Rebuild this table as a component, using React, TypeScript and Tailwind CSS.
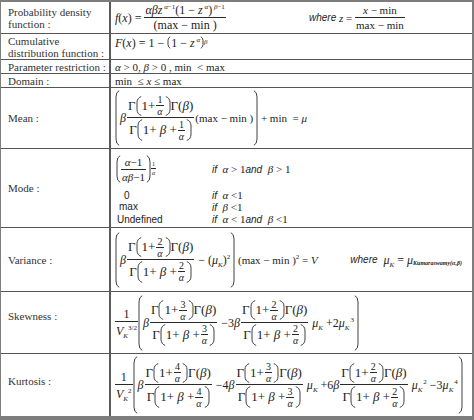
import React from 'react';

const serif = "font-['Liberation_Serif','Times_New_Roman',serif]";
const sans = "font-['Liberation_Sans',Arial,sans-serif]";

type Kids = { children?: React.ReactNode };

const V = ({ children }: Kids) => <span className="italic">{children}</span>;
const Sup = ({ children }: Kids) => <span className="relative -top-[5px] text-[7px] leading-none">{children}</span>;
const Sub = ({ children }: Kids) => <span className="relative top-[3px] text-[7px] leading-none italic">{children}</span>;
const W = ({ children }: Kids) => <span className={`${sans} italic text-[10px]`}>{children}</span>;
const T = ({ children }: Kids) => <span className="text-[11px]">{children}</span>;

// stretched delimiter, drawn like a MathType big paren
function P({ h, r = false, w = 5 }: { h: number; r?: boolean; w?: number }) {
  const c = Math.min(7, h / 3);
  const d = r
    ? `M0.8 0.6 Q${w - 1} 2 ${w - 1} ${c} L${w - 1} ${h - c} Q${w - 1} ${h - 2} 0.8 ${h - 0.6}`
    : `M${w - 0.8} 0.6 Q1 2 1 ${c} L1 ${h - c} Q1 ${h - 2} ${w - 0.8} ${h - 0.6}`;
  return (
    <svg width={w} height={h} viewBox={`0 0 ${w} ${h}`} className="block shrink-0">
      <path d={d} fill="none" stroke="#2a2a2a" strokeWidth="0.9" />
    </svg>
  );
}

function Frac({ n, d, cls = '' }: { n: React.ReactNode; d: React.ReactNode; cls?: string }) {
  return (
    <span className={`inline-flex flex-col items-stretch ${cls}`}>
      <span className="flex items-end justify-center px-px">{n}</span>
      <span className="my-px h-px bg-[#2a2a2a]" />
      <span className="flex items-start justify-center px-px">{d}</span>
    </span>
  );
}

const Small = ({ k }: { k: React.ReactNode }) => (
  <Frac cls="text-[10px] leading-[9px] mx-px" n={k} d={<V>α</V>} />
);

const Mu = ({ p }: { p?: React.ReactNode }) => (
  <span className="whitespace-nowrap">
    <V>μ</V>
    <span className="relative top-[3px] text-[7px] leading-none italic">K</span>
    {p && <span className="relative -top-[5px] ml-px text-[7px] leading-none">{p}</span>}
  </span>
);

function GFrac({ k }: { k: string }) {
  return (
    <Frac
      cls="mx-px text-[13px]"
      n={
        <span className="flex items-center">
          <span>Γ</span>
          <P h={20} w={6} />
          <span>1+</span>
          <Small k={k} />
          <P h={20} r w={6} />
          <span>Γ(</span>
          <V>β</V>
          <span>)</span>
        </span>
      }
      d={
        <span className="flex items-center">
          <span>Γ</span>
          <P h={22} w={6} />
          <span>1+&nbsp;</span>
          <V>β</V>
          <span>&nbsp;+</span>
          <Small k={k} />
          <P h={22} r w={6} />
        </span>
      }
    />
  );
}

function Row({ h, label, children, last = false, lcls = 'items-center', rcls = 'items-center text-[12px]' }: {
  h: string; label: React.ReactNode; children?: React.ReactNode; last?: boolean; lcls?: string; rcls?: string;
}) {
  return (
    <div className={`flex ${h} ${last ? '' : 'border-b border-[#555]'}`}>
      <div className={`flex w-[108px] shrink-0 pl-[7px] text-[11px] leading-[12px] text-[#333] ${lcls}`}>{label}</div>
      <div className={`flex flex-1 border-l-2 border-[#5a5a5a] pl-[4px] leading-[12px] text-[#222] ${rcls}`}>{children}</div>
    </div>
  );
}

export default function App() {
  return (
    <div className={`${serif} h-[420px] w-[474px] bg-white`}>
      <div className="flex h-[420px] flex-col border-t-2 border-r-2 border-b-4 border-l border-[#7d7d7d]">
        <Row h="h-[32px]" lcls="items-start pt-[4px]" label={<span>Probability density<br />function :</span>}>
          <span className="flex w-[194px] items-center">
            <span><V>f</V>(<V>x</V>) =&nbsp;</span>
            <Frac
              n={<span className="whitespace-nowrap"><V>αβz</V><Sup>&nbsp;<V>α</V>−1</Sup>(1 − <V>z</V><Sup>&nbsp;<V>α</V></Sup>)<Sup>&nbsp;<V>β</V>−1</Sup></span>}
              d={<span>(max − min )</span>}
            />
          </span>
          <span className="flex items-center text-[11px]">
            <W>where</W>
            <span>&nbsp;<V>z</V> =&nbsp;</span>
            <Frac n={<span className="px-[6px]"><V>x</V> − min</span>} d={<span>max − min</span>} />
          </span>
        </Row>

        <Row h="h-[26px]" lcls="items-start pt-[1px]" rcls="items-start pt-[2px] text-[12px]" label={<span>Cumulative<br />distribution function :</span>}>
          <span className="flex items-center">
            <span><V>F</V>(<V>x</V>) = 1 −&nbsp;</span>
            <P h={13} w={4} />
            <span>1 − <V>z</V><Sup>&nbsp;<V>α</V></Sup></span>
            <P h={13} r w={4} />
            <span className="self-start text-[7px]"><V>β</V></span>
          </span>
        </Row>

        <Row h="h-[14px]" rcls="items-center text-[11px]" label={<span>Parameter restriction :</span>}>
          <span><V>α</V> &gt; 0, <V>β</V> &gt; 0 , min &nbsp;&lt; max</span>
        </Row>

        <Row h="h-[14px]" rcls="items-center text-[11px]" label={<span>Domain :</span>}>
          <span>min &nbsp;≤ <V>x</V> ≤ max</span>
        </Row>

        <Row h="h-[61px]" label={<span>Mean :</span>}>
          <P h={56} />
          <V>β</V>
          <GFrac k="1" />
          <T>(max − min )</T>
          <P h={56} r />
          <T>&nbsp;+ min &nbsp;= <V>μ</V></T>
        </Row>

        <Row h="h-[79px]" label={<span>Mode :</span>} rcls="flex-col items-stretch pt-[2px] text-[11px]">
          <div className="flex h-[36px] items-center">
            <span className="flex w-[97px] items-center pl-[1px]">
              <P h={28} />
              <Frac n={<span><V>α</V>−1</span>} d={<span><V>αβ</V>−1</span>} />
              <P h={28} r />
              <span className="self-start pt-[1px]">
                <Frac cls="text-[6px] leading-[6px]" n="1" d={<V>α</V>} />
              </span>
            </span>
            <span><W>if</W> &nbsp;<V>α</V> &gt; 1<W>and</W> &nbsp;<V>β</V> &gt; 1</span>
          </div>
          <div className="mt-[3px] flex h-[11px] items-center">
            <span className={`${sans} w-[97px] pl-[9px] text-[10px]`}>0</span>
            <span><W>if</W> &nbsp;<V>α</V> &lt;1</span>
          </div>
          <div className="flex h-[12px] items-center">
            <span className={`${sans} w-[97px] pl-[4px] text-[10px]`}>max</span>
            <span><W>if</W> &nbsp;<V>β</V> &lt;1</span>
          </div>
          <div className="flex h-[13px] items-center">
            <span className={`${sans} w-[97px] pl-[2px] text-[10px]`}>Undefined</span>
            <span><W>if</W> &nbsp;<V>α</V> &lt; 1<W>and</W> &nbsp;<V>β</V> &lt;1</span>
          </div>
        </Row>

        <Row h="h-[64px]" label={<span>Variance :</span>}>
          <P h={56} />
          <V>β</V>
          <GFrac k="2" />
          <span>&nbsp;− (<Mu />)<Sup>2</Sup></span>
          <P h={56} r />
          <T>&nbsp;(max − min )<Sup>2</Sup> = <V>V</V></T>
          <span className="ml-auto mr-[10px] flex items-center">
            <W>where</W>
            <span>&nbsp;&nbsp;<Mu /> = <V>μ</V></span>
            <span className="relative top-[3px] text-[6px] font-bold italic">Kumaraswamy(α,β)</span>
          </span>
        </Row>

        <Row h="h-[62px]" lcls="items-start pt-[18px]" label={<span>Skewness :</span>}>
          <Frac n={<span>1</span>} d={<span className="pt-[2px]"><V>V</V><Sub>K</Sub><Sup>3/2</Sup></span>} />
          <P h={56} />
          <V>β</V>
          <GFrac k="3" />
          <span>&nbsp;−3<V>β</V></span>
          <GFrac k="2" />
          <span>&nbsp;<Mu />&nbsp;+2<Mu p="3" /></span>
          <P h={56} r />
        </Row>

        <Row h="h-[62px]" last lcls="items-start pt-[21px]" label={<span>Kurtosis :</span>}>
          <Frac n={<span>1</span>} d={<span className="pt-[2px]"><V>V</V><Sub>K</Sub><Sup>2</Sup></span>} />
          <P h={58} />
          <V>β</V>
          <GFrac k="4" />
          <span>&nbsp;−4<V>β</V></span>
          <GFrac k="3" />
          <span>&nbsp;<Mu />&nbsp;+6<V>β</V></span>
          <GFrac k="2" />
          <span>&nbsp;<Mu p="2" />&nbsp;−3<Mu p="4" /></span>
          <P h={58} r />
        </Row>
      </div>
    </div>
  );
}
